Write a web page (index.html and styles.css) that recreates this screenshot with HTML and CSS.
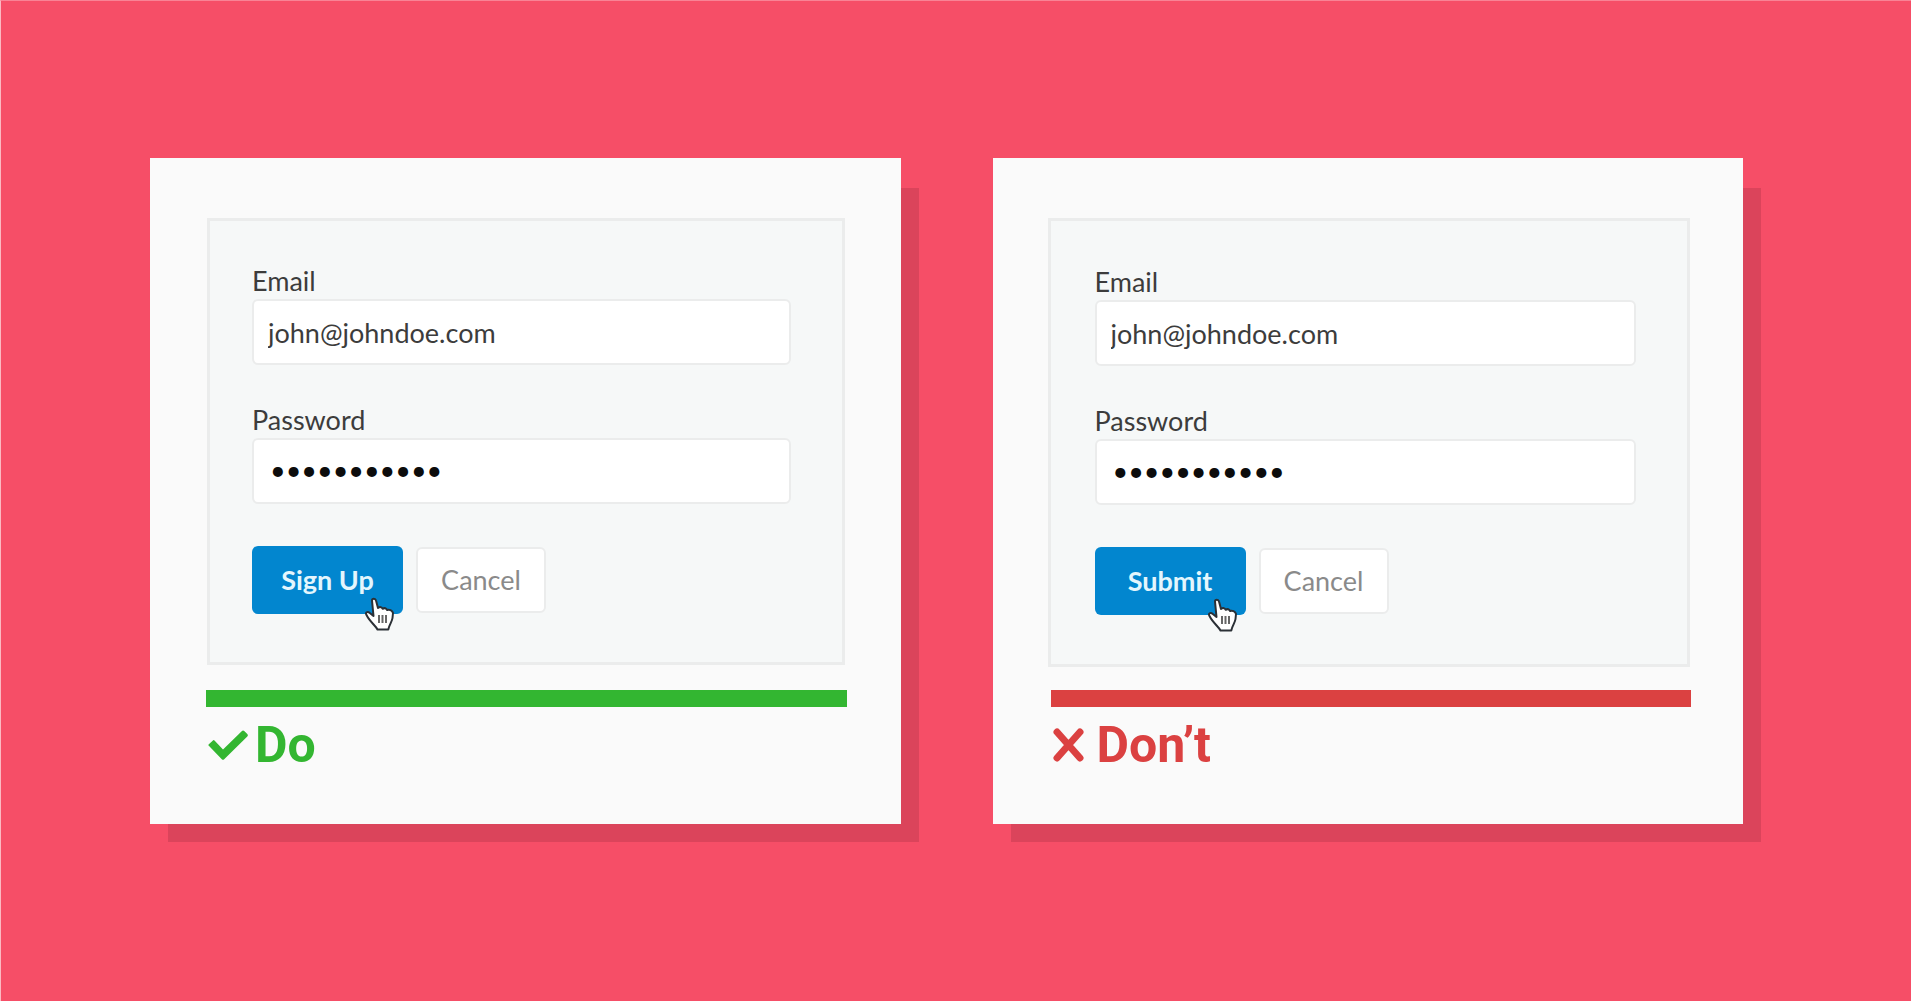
FILE: index.html
```html
<!DOCTYPE html>
<html lang="en">
<head>
  <meta charset="utf-8">
  <meta name="viewport" content="width=device-width, initial-scale=1">
  <title>Button labels: do and don’t</title>
  <link rel="stylesheet" href="styles.css">
</head>
<body>
  <svg class="sprite" aria-hidden="true">
    <symbol id="pointer" viewBox="0 0 32 36">
      <path d="M8 4.500C8 2 11.500 2 12 4.500L14 12C16 10.500 18 11 18.600 12.800C20.500 11.500 22.500 12.200 23 14C25 13 28.500 14.500 29 17L28.500 22C28 26 25.500 28 24.300 33.500H13.500C12 30 6 26 2.500 19C1 16.500 3.500 15 5.500 16.800L9.500 20Z" fill="#fff" stroke="#2b3036" stroke-width="2" stroke-linejoin="round"/>
      <path d="M15 19V27M18.500 19V27M22 19V27" fill="none" stroke="#666" stroke-width="2"/>
    </symbol>
  </svg>

  <main class="comparison">
    <section class="card card--do">
      <form class="panel">
        <div class="field">
          <label class="label" for="do-email">Email</label>
          <input class="input" id="do-email" type="text" value="john@johndoe.com">
        </div>
        <div class="field">
          <label class="label" for="do-password">Password</label>
          <input class="input input--password" id="do-password" type="password" value="password123">
        </div>
        <div class="actions">
          <button class="button button--primary" type="button">Sign Up<svg class="cursor" aria-hidden="true"><use href="#pointer"/></svg></button>
          <button class="button button--plain" type="button">Cancel</button>
        </div>
      </form>
      <div class="verdict">
        <svg class="verdict-icon verdict-icon--check" viewBox="0 0 40 30" aria-hidden="true"><path d="M5.500 10L0.800 14.200Q0 15 0.800 15.800L13.800 29.200Q15 30.400 16.200 29.200L39.300 6.500Q40.500 5.300 39.300 4L36.500 1.200Q35 0 33.700 1.200L15 19.500L6.500 10.500Q5.500 9.500 4.500 10.500Z" fill="currentColor"/></svg>
        <h2 class="verdict-text">Do</h2>
      </div>
    </section>

    <section class="card card--dont">
      <form class="panel">
        <div class="field">
          <label class="label" for="dont-email">Email</label>
          <input class="input" id="dont-email" type="text" value="john@johndoe.com">
        </div>
        <div class="field">
          <label class="label" for="dont-password">Password</label>
          <input class="input input--password" id="dont-password" type="password" value="password123">
        </div>
        <div class="actions">
          <button class="button button--primary" type="button">Submit<svg class="cursor" aria-hidden="true"><use href="#pointer"/></svg></button>
          <button class="button button--plain" type="button">Cancel</button>
        </div>
      </form>
      <div class="verdict">
        <svg class="verdict-icon verdict-icon--cross" viewBox="0 0 31 34" aria-hidden="true"><path d="M4 4L27 30M27 4L4 30" fill="none" stroke="currentColor" stroke-width="7" stroke-linecap="round"/></svg>
        <h2 class="verdict-text">Don’t</h2>
      </div>
    </section>
  </main>
</body>
</html>
```
FILE: styles.css
```css
* {
  box-sizing: border-box;
}

body {
  margin: 0;
  min-height: 100vh;
  background: #f64e67;
  border-top: 1px solid #f98395;
  border-left: 1px solid #fbb9c2;
  font-family: Lato, "Liberation Sans", sans-serif;
  font-size: 27px;
  color: #3c3c3c;
}

.sprite {
  display: none;
}

.comparison {
  display: grid;
  grid-template-columns: 1fr 1fr;
  gap: 92px;
  padding: 157px 168px 157px 149px;
}

.card {
  position: relative;
  display: flex;
  flex-direction: column;
  padding: 60px 54px 49px 56px;
  background: #fafafa;
}

/* Hard drop shadow, shorter than the card at the top */
.card::before {
  content: "";
  position: absolute;
  z-index: -1;
  top: 30px;
  right: -18px;
  bottom: -18px;
  left: 18px;
  background: #db445b;
}

.panel {
  display: flex;
  flex-direction: column;
  gap: 38px;
  padding: 43px 51px 48px 42px;
  border: 3px solid #ebecec;
  background: #f6f8f8;
}

.card--do .panel {
  margin: 0 2px 0 1px;
}

.card--dont {
  padding-right: 52px;
  padding-left: 58px;
}

.card--dont .panel {
  margin: 0 1px 0 -3px;
  padding-top: 44px;
  padding-bottom: 49px;
  padding-left: 44px;
}

.field {
  display: flex;
  flex-direction: column;
}

.label {
  margin-bottom: 2px;
  line-height: 33px;
}

.input {
  width: 100%;
  height: 66px;
  padding: 0 14px;
  border: 2px solid #ebecec;
  border-radius: 6px;
  background: #fff;
  color: inherit;
  font: inherit;
}

.input--password {
  padding-left: 16px;
  padding-bottom: 4px;
  color: #0c0c0c;
}

.actions {
  display: flex;
  align-items: center;
  gap: 13px;
  padding-top: 4px;
}

.button {
  position: relative;
  padding: 0 0 2px;
  border-radius: 6px;
  font: inherit;
}

.button--primary {
  width: 151px;
  height: 68px;
  border: 0;
  background: #0286cf;
  color: #e4f6fd;
  font-weight: 700;
}

.button--plain {
  width: 130px;
  height: 66px;
  border: 2px solid #ebecec;
  background: #fff;
  color: #8a8a8a;
}

.cursor {
  position: absolute;
  right: 7px;
  bottom: -18px;
  width: 32px;
  height: 36px;
}

.verdict {
  display: flex;
  align-items: center;
  margin-top: auto;
  padding-top: 8px;
  border-top: 17px solid currentColor;
}

.card--do .verdict {
  color: #33b631;
}

.card--dont .verdict {
  margin-top: 23px;
  color: #db4141;
}

.verdict-icon--check {
  width: 40px;
  height: 30px;
  margin: 0 7px 0 2px;
}

.verdict-icon--cross {
  width: 31px;
  height: 34px;
  margin: 0 13px 0 2px;
}

.verdict-text {
  margin: 0;
  font: 700 50px/60px Roboto, "Liberation Sans", sans-serif;
}
```
